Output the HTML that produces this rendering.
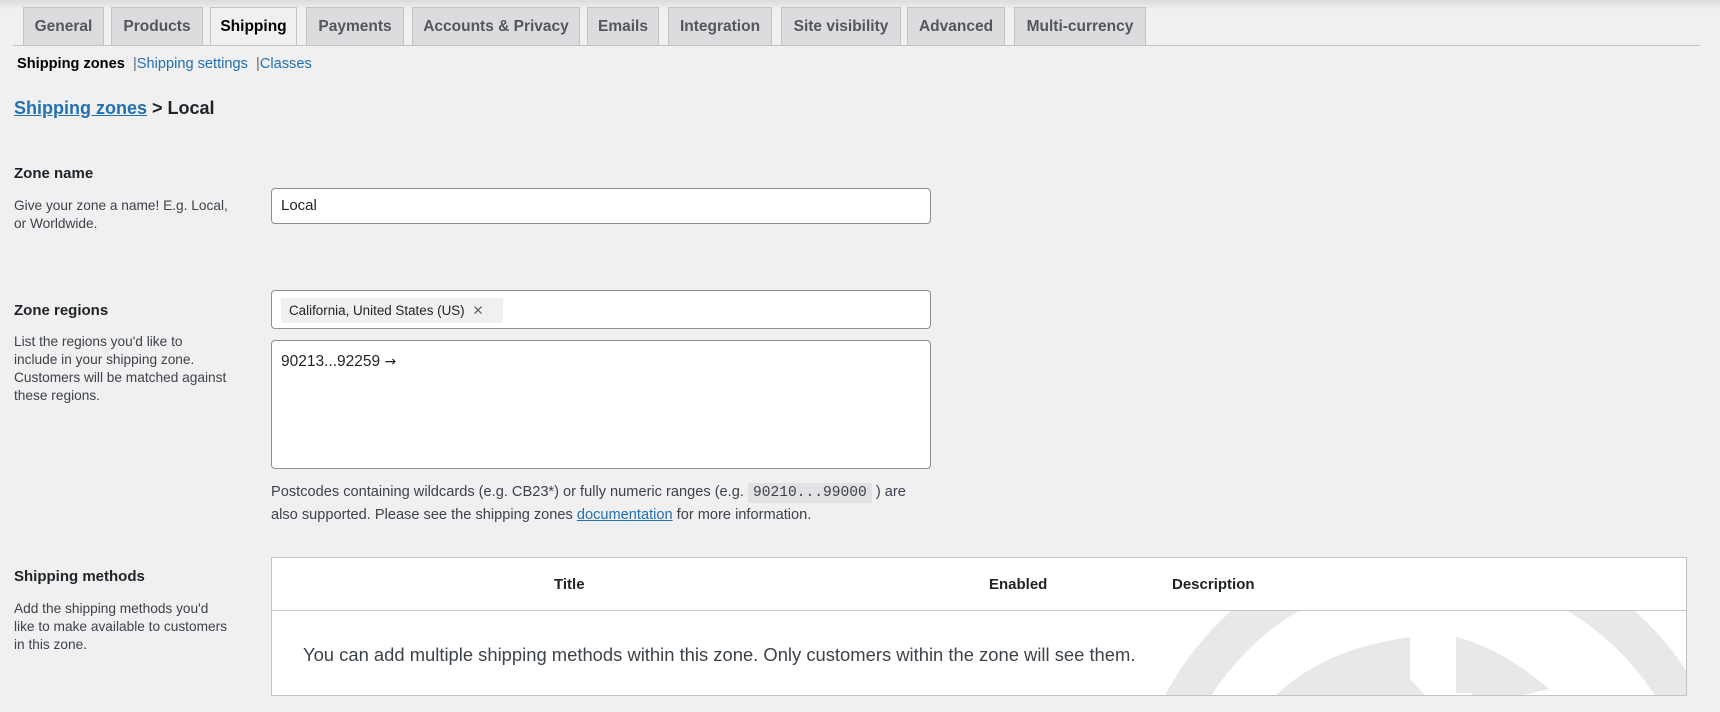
<!DOCTYPE html>
<html><head><meta charset="utf-8"><style>
*{box-sizing:border-box;margin:0;padding:0}
body{width:1720px;height:712px;overflow:hidden;background:#f0f0f1;font-family:"Liberation Sans",sans-serif;color:#1d2327;position:relative}
.shadow{position:absolute;left:0;top:0;width:1720px;height:10px;background:linear-gradient(#dcdcde,#f0f0f1)}
.tab{position:absolute;top:7px;height:38px;background:#dcdcde;border:1px solid #c3c4c7;border-bottom:none;font-size:15.5px;font-weight:bold;color:#50575e;text-align:center;line-height:37px}
.tab.act{background:#f0f0f1;color:#000;height:39px}
.line{position:absolute;left:13px;top:45px;width:1687px;height:1px;background:#c3c4c7}
.a{position:absolute;white-space:nowrap}
.lnk{color:#2271b1}
.lab{font-size:15px;font-weight:bold}
.desc{font-size:13.7px;line-height:18px;color:#3c434a}
.box{position:absolute;background:#fff;border:1px solid #8c8f94;border-radius:4px}
</style></head><body>
<div class="shadow"></div>
<div class="tab" style="left:23px;width:81px">General</div>
<div class="tab" style="left:111px;width:92px">Products</div>
<div class="tab act" style="left:210px;width:87px">Shipping</div>
<div class="tab" style="left:306px;width:98px">Payments</div>
<div class="tab" style="left:412px;width:168px">Accounts &amp; Privacy</div>
<div class="tab" style="left:587px;width:72px">Emails</div>
<div class="tab" style="left:668px;width:104px">Integration</div>
<div class="tab" style="left:781px;width:120px">Site visibility</div>
<div class="tab" style="left:907px;width:98px">Advanced</div>
<div class="tab" style="left:1014px;width:132px">Multi-currency</div>
<div class="line"></div>
<div class="a" style="left:17px;top:56px;font-size:14.6px"><b style="color:#000">Shipping zones</b> <span style="color:#646970">&nbsp;|</span><span class="lnk">Shipping settings</span> <span style="color:#646970">&nbsp;|</span><span class="lnk">Classes</span></div>
<div class="a" style="left:14px;top:98px;font-size:18px;font-weight:bold"><span class="lnk" style="text-decoration:underline">Shipping zones</span> &gt; Local</div>

<div class="a lab" style="left:14px;top:165px">Zone name</div>
<div class="a desc" style="left:14px;top:197px">Give your zone a name! E.g. Local,<br>or Worldwide.</div>
<div class="box" style="left:271px;top:188px;width:660px;height:36px;padding:8px 9px;font-size:15px">Local</div>

<div class="a lab" style="left:14px;top:302px">Zone regions</div>
<div class="a desc" style="left:14px;top:333px">List the regions you'd like to<br>include in your shipping zone.<br>Customers will be matched against<br>these regions.</div>
<div class="box" style="left:271px;top:290px;width:660px;height:39px"><div class="a" style="left:9px;top:7px;height:25px;width:222px;background:#f0f0f1;border-radius:2px;font-size:13.4px;line-height:25px;padding-left:8px;color:#1d2327">California, United States (US) <span style="color:#646970;margin-left:4px">✕</span></div></div>
<div class="box" style="left:271px;top:340px;width:660px;height:129px;padding:12px 9px;font-size:15.5px">90213...92259 <span style="font-family:'DejaVu Sans',sans-serif;font-size:14px">→</span></div>
<div class="a" style="left:271px;top:481px;font-size:14.6px;line-height:22px;color:#3c434a">Postcodes containing wildcards (e.g. CB23*) or fully numeric ranges (e.g. <code style="font-family:'Liberation Mono',monospace;background:#e2e2e4;padding:2px 5px;font-size:14.6px">90210...99000</code> ) are<br>also supported. Please see the shipping zones <span class="lnk" style="text-decoration:underline">documentation</span> for more information.</div>

<div class="a lab" style="left:14px;top:568px">Shipping methods</div>
<div class="a desc" style="left:14px;top:600px">Add the shipping methods you'd<br>like to make available to customers<br>in this zone.</div>
<div class="a" style="left:271px;top:557px;width:1416px;height:139px;background:#fff;border:1px solid #c3c4c7;overflow:hidden">
<svg style="position:absolute;left:890px;top:53px" width="526" height="86" viewBox="0 0 526 86">
<circle cx="271" cy="226" r="283" fill="none" stroke="#e8e8e8" stroke-width="40"/>
<path d="M112 86 C150 50 190 35 248 26 L248 68 L265 86 Z" fill="#e8e8e8"/>
<path d="M294 26 C330 35 360 55 387 78 L353 86 L310 86 L310 82 L294 82 Z" fill="#e8e8e8"/>
</svg>
<div class="a" style="left:0;top:0;width:1414px;height:53px;border-bottom:1px solid #c3c4c7;background:#fff;font-size:15px;font-weight:bold">
<span class="a" style="left:282px;top:18px">Title</span>
<span class="a" style="left:717px;top:18px">Enabled</span>
<span class="a" style="left:900px;top:18px">Description</span></div>
<div class="a" style="left:31px;top:86px;font-size:18.4px;color:#3c434a">You can add multiple shipping methods within this zone. Only customers within the zone will see them.</div>
</div>
</body></html>
